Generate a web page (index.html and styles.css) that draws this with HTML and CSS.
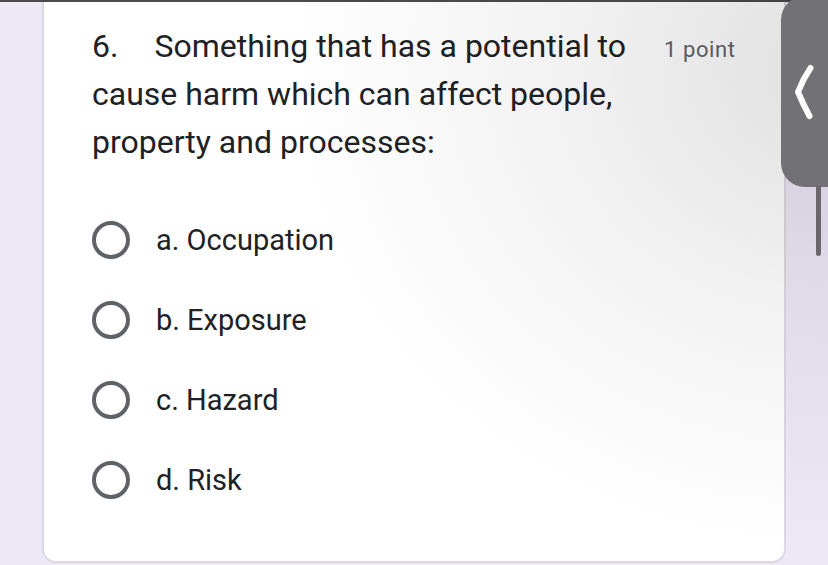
FILE: index.html
```html
<!DOCTYPE html>
<html lang="en">
<head>
<meta charset="utf-8">
<title>Question 6</title>
<link rel="stylesheet" href="styles.css">
</head>
<body>
<div class="topbar"></div>
<main class="page">
  <section class="card">
    <div class="question">
      <div class="qtext">6.<span class="qgap"></span>Something that has a potential to cause harm which can affect people, property and processes:</div>
      <div class="points">1 point</div>
    </div>
    <ul class="options">
      <li class="option"><span class="radio"></span><span class="label">a. Occupation</span></li>
      <li class="option"><span class="radio"></span><span class="label">b. Exposure</span></li>
      <li class="option"><span class="radio"></span><span class="label">c. Hazard</span></li>
      <li class="option"><span class="radio"></span><span class="label">d. Risk</span></li>
    </ul>
  </section>
</main>
<div class="shade"></div>
<div class="handle">
  <svg class="chev" width="47" height="191" viewBox="0 0 47 191">
    <path d="M29.5 72 Q22 83 17 96 Q22 108 28.5 120" fill="none" stroke="#ffffff" stroke-width="6" stroke-linecap="round" stroke-linejoin="round"/>
  </svg>
</div>
<div class="handle-bar"></div>
</body>
</html>
```

FILE: styles.css
```css
* { box-sizing: border-box; }
html, body { margin: 0; padding: 0; }
body {
  width: 828px;
  height: 565px;
  overflow: hidden;
  background: #ece8f6;
  font-family: Roboto, "Noto Sans", Arial, sans-serif;
  color: #202124;
  position: relative;
}
.topbar {
  height: 2px;
  background: #4b4b4d;
}
.page {
  padding-left: 42px;
}
.card {
  width: 744px;
  height: 561px;
  background: #ffffff;
  border: 2px solid #dcd8e3;
  border-top: none;
  border-radius: 0 0 14px 14px;
  padding: 20px 0 0 48px;
}
.question {
  display: flex;
  align-items: baseline;
}
.qtext {
  width: 548px;
  font-size: 32px;
  line-height: 48px;
  color: #202124;
}
.qgap {
  display: inline-block;
  width: 36px;
}
.points {
  margin-left: 24px;
  font-size: 22px;
  color: #5f6368;
  letter-spacing: 0.6px;
}
.options {
  list-style: none;
  margin: 34px 0 0 0;
  padding: 0;
}
.option {
  display: flex;
  align-items: center;
  height: 80px;
}
.radio {
  width: 38px;
  height: 38px;
  border: 4px solid #5f6368;
  border-radius: 50%;
  flex: none;
}
.label {
  margin-left: 26px;
  font-size: 29px;
  color: #202124;
}
.shade {
  position: absolute;
  left: 0;
  top: 0;
  width: 828px;
  height: 565px;
  pointer-events: none;
  background: radial-gradient(ellipse 540px 480px at 828px 70px, rgba(0,0,0,0.12) 0%, rgba(0,0,0,0.05) 50%, rgba(0,0,0,0) 100%);
}
.handle {
  position: absolute;
  right: 0;
  top: -4px;
  width: 47px;
  height: 191px;
  background: #727175;
  border-radius: 24px 0 0 24px;
}
.chev {
  display: block;
}
.handle-bar {
  position: absolute;
  left: 816px;
  top: 186px;
  width: 5px;
  height: 70px;
  background: #69676c;
  border-radius: 0 0 3px 3px;
}
```
